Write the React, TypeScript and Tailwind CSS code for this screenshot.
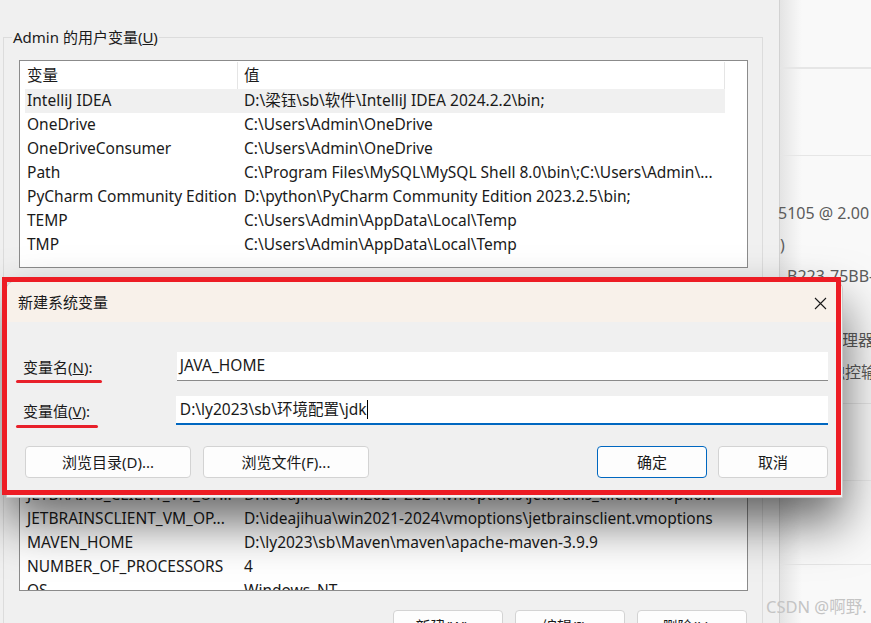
import React from "react";

const userVars: [string, string][] = [
  ["IntelliJ IDEA", "D:\\梁钰\\sb\\软件\\IntelliJ IDEA 2024.2.2\\bin;"],
  ["OneDrive", "C:\\Users\\Admin\\OneDrive"],
  ["OneDriveConsumer", "C:\\Users\\Admin\\OneDrive"],
  ["Path", "C:\\Program Files\\MySQL\\MySQL Shell 8.0\\bin\\;C:\\Users\\Admin\\..."],
  ["PyCharm Community Edition", "D:\\python\\PyCharm Community Edition 2023.2.5\\bin;"],
  ["TEMP", "C:\\Users\\Admin\\AppData\\Local\\Temp"],
  ["TMP", "C:\\Users\\Admin\\AppData\\Local\\Temp"],
];

const systemVars: [string, string][] = [
  ["ComSpec", "C:\\WINDOWS\\system32\\cmd.exe"],
  ["DriverData", "C:\\Windows\\System32\\Drivers\\DriverData"],
  ["GATEWAY_VM_OPTIONS", "D:\\ideajihua\\win2021-2024\\vmoptions\\gateway.vmoptions"],
  ["IDEA_VM_OPTIONS", "D:\\ideajihua\\win2021-2024\\vmoptions\\idea.vmoptions"],
  ["JETBRAINS_CLIENT_VM_OP...", "D:\\ideajihua\\win2021-2024\\vmoptions\\jetbrains_client.vmoptio..."],
  ["JETBRAINSCLIENT_VM_OP...", "D:\\ideajihua\\win2021-2024\\vmoptions\\jetbrainsclient.vmoptions"],
  ["MAVEN_HOME", "D:\\ly2023\\sb\\Maven\\maven\\apache-maven-3.9.9"],
  ["NUMBER_OF_PROCESSORS", "4"],
  ["OS", "Windows_NT"],
];

function VarRow({ name, value, active }: { name: string; value: string; active?: boolean }) {
  return (
    <div className={`flex h-[24px] w-[700px] shrink-0 items-center whitespace-nowrap ${active ? "bg-[#f0f0f0]" : ""}`}>
      <span className="w-[212px] overflow-hidden pl-[2px]">{name}</span>
      <span className="pl-[7px]">{value}</span>
    </div>
  );
}

function WinButton({ label, primary, className = "" }: { label: string; primary?: boolean; className?: string }) {
  return (
    <button
      className={`flex h-[32px] shrink-0 items-center justify-center rounded-[4px] border bg-[#fdfdfd] text-[15px] text-[#1a1a1a] ${
        primary ? "border-[#0067c0]" : "border-[#d3d3d3]"
      } ${className}`}
    >
      {label}
    </button>
  );
}

function NewVariableDialog() {
  return (
    <div className="absolute left-[6px] top-[281px] flex h-[217px] w-[837px] flex-col overflow-hidden rounded-t-[8px] border border-[#c9c9c9] bg-[#f0f0f0] shadow-[0_24px_50px_rgba(0,0,0,0.6)]">
      <div className="flex h-[40px] items-center justify-between bg-[#f8f1ea] pl-[11px] pr-[15px]">
        <span className="text-[15px] text-[#1a1a1a]">新建系统变量</span>
        <svg width="13" height="13" viewBox="0 0 13 13" className="mt-[2px]">
          <path d="M1 1 L12 12 M12 1 L1 12" stroke="#1a1a1a" strokeWidth="1.1" />
        </svg>
      </div>

      <div className="flex flex-col pl-[16px] pr-[14px] pt-[30px] text-[15.5px]">
        <div className="flex items-center">
          <label className="relative w-[154px] text-[15px] leading-[20px]">
            变量名(<span className="underline">N</span>):
            <span className="absolute -left-[7px] top-full mt-[3px] h-[3px] w-[86px] rounded-full bg-[#e8202a]" />
          </label>
          <div className="flex h-[29px] w-[652px] items-center border-b border-[#8a8a8a] bg-white pl-[3px]">
            JAVA_HOME
          </div>
        </div>

        <div className="mt-[15px] flex items-center">
          <label className="relative w-[153px] text-[15px] leading-[20px]">
            变量值(<span className="underline">V</span>):
            <span className="absolute -left-[7px] top-full mt-[4px] h-[3px] w-[82px] rounded-full bg-[#e8202a]" />
          </label>
          <div className="flex h-[29px] w-[653px] items-center border-b-2 border-[#0067c0] bg-white pl-[4px]">
            D:\ly2023\sb\环境配置\jdk
            <span className="ml-[1px] h-[19px] w-[1px] bg-black" />
          </div>
        </div>

        <div className="mt-[21px] flex items-center pl-[2px]">
          <WinButton label="浏览目录(D)..." className="w-[166px]" />
          <WinButton label="浏览文件(F)..." className="ml-[12px] w-[166px]" />
          <WinButton label="确定" primary className="ml-auto w-[110px]" />
          <WinButton label="取消" className="ml-[11px] w-[110px]" />
        </div>
      </div>
    </div>
  );
}

export default function App() {
  return (
    <div className="relative flex h-[623px] w-[871px] overflow-hidden bg-[#f9f9f9] font-['Noto_Sans','Noto_Sans_CJK_SC',sans-serif] text-[15.5px] text-[#1a1a1a]">
      {/* environment variables window */}
      <div className="flex w-[780px] shrink-0 flex-col border-r border-[#d2d2d2] bg-[#f0f0f0] pl-[3px] pr-[16px] pt-[27px]">
        <fieldset className="h-[313px] shrink-0 border border-[#dcdcdc] pl-[15px]">
          <legend className="-ml-[7px] px-[1px] text-[15px] leading-[20px]">
            Admin 的用户变量(<span className="underline">U</span>)
          </legend>
          <div className="mt-[13px] h-[208px] w-[729px] border border-[#8b8b8b] bg-white pl-[5px] pt-px">
            <div className="flex h-[27px] items-center">
              <span className="w-[212px] pl-[2px]">变量</span>
              <span className="h-full w-px bg-[#e5e5e5]" />
              <span className="w-[486px] pl-[6px]">值</span>
              <span className="h-full w-px bg-[#e5e5e5]" />
            </div>
            {userVars.map(([n, v], i) => (
              <VarRow key={n} name={n} value={v} active={i === 0} />
            ))}
          </div>
        </fieldset>

        <fieldset className="mt-[10px] flex-1 border border-[#dcdcdc] pl-[15px]">
          <legend className="-ml-[7px] px-[1px] text-[15px] leading-[20px]">
            系统变量(<span className="underline">S</span>)
          </legend>
          <div className="mt-[3px] flex h-[218px] w-[729px] flex-col overflow-hidden border border-[#8b8b8b] bg-white pl-[5px] pt-[13px]">
            {systemVars.map(([n, v]) => (
              <VarRow key={n} name={n} value={v} />
            ))}
          </div>
          <div className="mt-[19px] flex gap-[12px] pl-[374px]">
            <WinButton label="新建(W)..." className="w-[110px]" />
            <WinButton label="编辑(I)..." className="w-[110px]" />
            <WinButton label="删除(L)..." className="w-[110px]" />
          </div>
        </fieldset>
      </div>

      {/* system settings window behind */}
      <div className="flex flex-1 flex-col bg-[linear-gradient(to_right,#e4e4e4,#f9f9f9_22px)] text-[16px] text-[#5c5c5c]">
        <div className="mt-[67px] h-[2px] bg-[#e6e6e6]" />
        <div className="mt-[86px] h-px bg-[#e6e6e6]" />
        <div className="-ml-[2px] mt-[46px] whitespace-nowrap leading-[22px]">5105 @ 2.00 GHz</div>
        <div className="mt-[10px] whitespace-nowrap leading-[22px]">)</div>
        <div className="mt-[9px] whitespace-nowrap pl-[7px] leading-[22px]">B223-75BB-4C</div>
        <div className="mt-[42px] whitespace-nowrap pl-[30px] leading-[22px]">的处理器</div>
        <div className="mt-[10px] whitespace-nowrap pl-[49px] leading-[22px]">触控输入</div>
        <div className="mt-[20px] h-px bg-[#e6e6e6]" />
        <div className="mt-[76px] h-px bg-[#ececec]" />
        <div className="mt-[83px] h-px bg-[#e6e6e6]" />
      </div>

      <NewVariableDialog />

      {/* annotation frame */}
      <div className="absolute left-[2px] top-[277px] h-[218px] w-[839px] border-[5px] border-[#ed1c24]" />

      <div className="absolute left-[766px] top-[595px] text-[16.5px] text-[#c4c4c4]">CSDN @啊野.</div>
    </div>
  );
}
